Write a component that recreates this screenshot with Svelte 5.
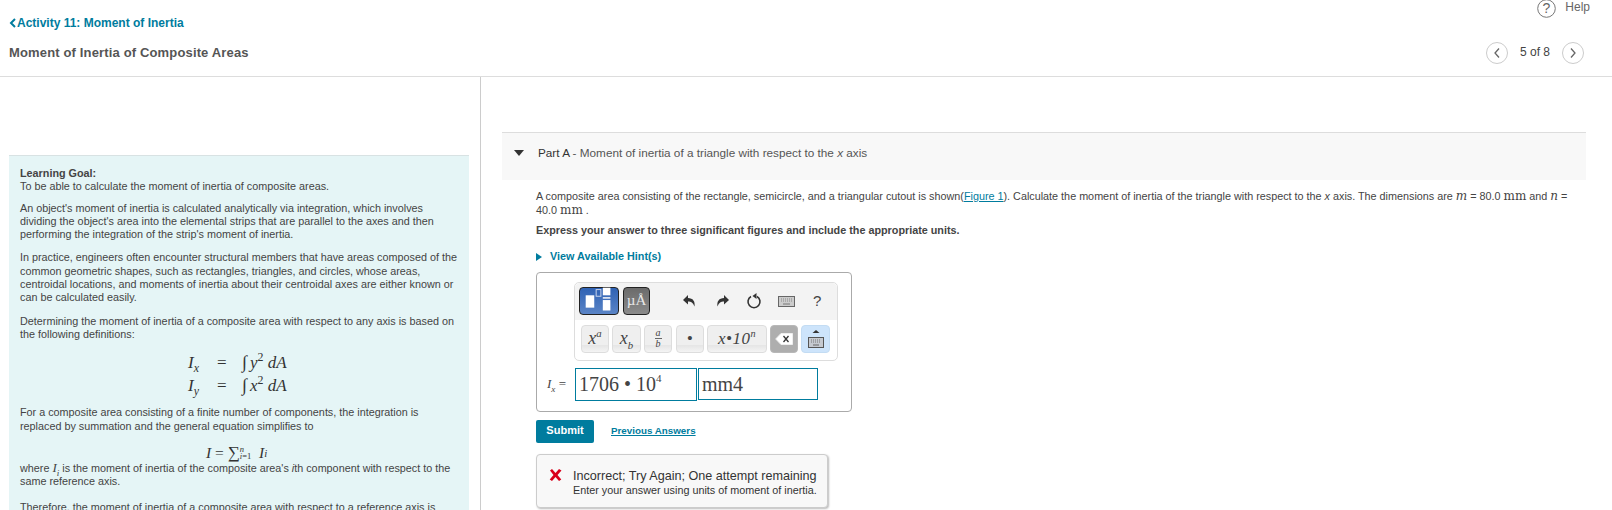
<script>
    const buttons = ['sup', 'sub', 'frac', 'dot', 'sci'];
</script>

<div class="page">
    <header>
        <div class="help">
            <svg width="19" height="19" viewBox="0 0 19 19"><circle cx="9.500" cy="9.500" r="8.800" fill="none" stroke="#777" stroke-width="1"/><text x="9.500" y="14" text-anchor="middle" class="qm">?</text></svg>
            <span>Help</span>
        </div>
        <a class="crumb" href="#a">
            <svg width="7" height="10" viewBox="0 0 7 10"><path d="M6 1 2 5l4 4" fill="none" stroke="#007c9e" stroke-width="2"/></svg>Activity 11: Moment of Inertia
        </a>
        <div class="titlebar">
            <h1>Moment of Inertia of Composite Areas</h1>
            <div class="pager">
                <span class="round"><svg width="8" height="12" viewBox="0 0 8 12"><path d="M6 1.500 2 6l4 4.500" fill="none" stroke="#666" stroke-width="1.300"/></svg></span>
                <span class="count">5 of 8</span>
                <span class="round"><svg width="8" height="12" viewBox="0 0 8 12"><path d="M2 1.500 6 6l-4 4.500" fill="none" stroke="#666" stroke-width="1.300"/></svg></span>
            </div>
        </div>
    </header>

    <main>
        <section class="left">
            <div class="goal">
                <p class="first"><b>Learning Goal:</b><br/>To be able to calculate the moment of inertia of composite areas.</p>
                <p>An object's moment of inertia is calculated analytically via integration, which involves dividing the object's area into the elemental strips that are parallel to the axes and then performing the integration of the strip's moment of inertia.</p>
                <p>In practice, engineers often encounter structural members that have areas composed of the common geometric shapes, such as rectangles, triangles, and circles, whose areas, centroidal locations, and moments of inertia about their centroidal axes are either known or can be calculated easily.</p>
                <p>Determining the moment of inertia of a composite area with respect to any axis is based on the following definitions:</p>
                <div class="eqs">
                    <div class="eq"><span class="lhs"><i>I</i><sub><i>x</i></sub></span><span class="rel">=</span><span class="rhs"><i class="int">∫</i><i>y</i><sup>2</sup> <i>dA</i></span></div>
                    <div class="eq"><span class="lhs"><i>I</i><sub><i>y</i></sub></span><span class="rel">=</span><span class="rhs"><i class="int">∫</i><i>x</i><sup>2</sup> <i>dA</i></span></div>
                </div>
                <p class="tight">For a composite area consisting of a finite number of components, the integration is replaced by summation and the general equation simplifies to</p>
                <div class="sum"><i>I</i> = <span class="sigma">∑</span><span class="limits"><i>n</i><span><i>i</i>=1</span></span>&nbsp;&nbsp;<i>I</i><sub><i>i</i></sub></div>
                <p class="where">where <span class="mi"><i>I</i><sub><i>i</i></sub></span> is the moment of inertia of the composite area's <i>i</i>th component with respect to the same reference axis.</p>
                <p>Therefore, the moment of inertia of a composite area with respect to a reference axis is</p>
            </div>
        </section>

        <section class="right">
            <div class="part">
                <svg width="10" height="6" viewBox="0 0 10 6"><path d="M0 0h10L5 6z" fill="#333"/></svg>
                <span><span class="pn">Part A</span> - Moment of inertia of a triangle with respect to the <i>x</i> axis</span>
            </div>
            <div class="problem">
                <p class="statement">A composite area consisting of the rectangle, semicircle, and a triangular cutout is shown(<a href="#f">Figure 1</a>). Calculate the moment of inertia of the triangle with respect to the <i>x</i> axis. The dimensions are <span class="mv"><i>m</i></span> = 80.0 <span class="mv">mm</span> and <span class="mv"><i>n</i></span> = 40.0 <span class="mv">mm</span> .</p>
                <p class="express">Express your answer to three significant figures and include the appropriate units.</p>
                <div class="hint"><svg width="6" height="8" viewBox="0 0 6 8"><path d="M0 0l6 4-6 4z" fill="#007c9e"/></svg><span>View Available Hint(s)</span></div>

                <div class="answer">
                    <div class="toolbar">
                        <div class="tool-top">
                            <span class="tmpl">
                                <svg width="40" height="28" viewBox="0 0 40 28"><rect x="6" y="8" width="9" height="13" fill="#fff"/><rect x="17" y="2" width="5" height="7" fill="none" stroke="#cdd8ee"/><rect x="24" y="0" width="8" height="8" fill="#fff"/><rect x="24" y="10" width="8" height="1.500" fill="#fff"/><rect x="24" y="13" width="8" height="11" fill="#fff"/></svg>
                            </span>
                            <span class="symb">µÅ</span>
                            <div class="actions">
                                <svg width="16" height="14" viewBox="0 0 16 14"><path d="M6 1 1 6l5 4.500V7.500c3 0 5 1 6.500 5 .8-5-1.500-8.500-6.500-8.500z" fill="#333"/></svg>
                                <svg width="16" height="14" viewBox="0 0 16 14"><path d="M10 1l5 5-5 4.500V7.500c-3 0-5 1-6.500 5-.8-5 1.500-8.500 6.500-8.500z" fill="#333"/></svg>
                                <svg width="16" height="16" viewBox="0 0 16 16"><path d="M5 3.500A6 6 0 1 0 11 3.500" fill="none" stroke="#333" stroke-width="1.600"/><path d="M11.500 0v6L7.500 3z" fill="#333" transform="translate(-1 0)"/></svg>
                                <svg width="17" height="11" viewBox="0 0 17 11"><rect x=".5" y=".5" width="16" height="10" fill="#ccc" stroke="#666"/><path d="M3 3h11M3 5h11" stroke="#888" stroke-dasharray="1 1"/><path d="M5 8h7" stroke="#777"/></svg>
                                <span class="q">?</span>
                            </div>
                        </div>
                        <div class="tool-bottom">
                            {#each buttons as b}
                                <span class="key {b}">
                                    {#if b === 'sup'}<i>x<sup>a</sup></i>
                                    {:else if b === 'sub'}<i>x<sub>b</sub></i>
                                    {:else if b === 'frac'}<i class="fr"><span>a</span><span>b</span></i>
                                    {:else if b === 'dot'}<b>•</b>
                                    {:else}<i>x•10<sup>n</sup></i>{/if}
                                </span>
                            {/each}
                            <span class="key del">
                                <svg width="18" height="12" viewBox="0 0 18 12"><path d="M6 .5h11.500v11H6L.7 6z" fill="#fff" stroke="#eee"/><path d="M8.500 3l5 6m0-6l-5 6" stroke="#333" stroke-width="1.300"/></svg>
                            </span>
                            <span class="key kbd">
                                <svg width="16" height="18" viewBox="0 0 16 18"><path d="M8 0l3.500 3h-7z" fill="#333"/><rect x=".5" y="7.500" width="15" height="10" fill="#c5c9d0" stroke="#555"/><path d="M3 10h10M3 12h10" stroke="#777" stroke-dasharray="1 1"/><path d="M5 15h6" stroke="#666"/></svg>
                            </span>
                        </div>
                    </div>
                    <div class="inputs">
                        <span class="lbl"><i>I</i><sub><i>x</i></sub> =</span>
                        <span class="field first-f">1706 • 10<sup>4</sup></span>
                        <span class="field">mm4</span>
                    </div>
                </div>

                <div class="submit-row">
                    <span class="submit">Submit</span>
                    <a class="prev" href="#p">Previous Answers</a>
                </div>

                <div class="feedback">
                    <svg width="13" height="12" viewBox="0 0 13 12"><path d="M1 1.500 3 0l3.500 4L10 0l2.500 1.500L8.500 6l3.800 4.500-2.300 1.500-3.500-4L3 12 .7 10.500 4.500 6z" fill="#d9001b"/></svg>
                    <div class="fb-text">
                        <div class="fb-main">Incorrect; Try Again; One attempt remaining</div>
                        <div class="fb-sub">Enter your answer using units of moment of inertia.</div>
                    </div>
                </div>
            </div>
        </section>
    </main>
</div>

<style>
    :global(body) {
        background: #fff;
    }

    .page {
        height: 510px;
        overflow: hidden;
        font-family: "Liberation Sans", Arial, sans-serif;
        font-size: 10.8px;
        line-height: 13.300px;
        color: #444;
    }

    header {
        position: relative;
        height: 60px;
        border-bottom: 1px solid #ddd;
        padding: 16px 0 0 9px;
    }

    .help {
        position: absolute;
        top: 0;
        right: 22px;
        display: flex;
        align-items: center;
        gap: 9px;
        height: 16px;
        font-size: 12px;
        color: #666;
    }

    .qm {
        font: 14px "Liberation Sans", sans-serif;
        fill: #666;
    }

    .crumb {
        display: flex;
        align-items: center;
        gap: 1px;
        font-size: 12px;
        font-weight: bold;
        color: #007c9e;
        text-decoration: none;
        line-height: 14px;
    }

    .titlebar {
        display: flex;
        align-items: center;
        justify-content: space-between;
        margin-top: 12px;
        padding-right: 28px;
    }

    h1 {
        margin: 0;
        font-size: 13px;
        line-height: 16px;
        color: #555;
        letter-spacing: 0.150px;
    }

    .pager {
        display: flex;
        align-items: center;
        gap: 12px;
        font-size: 12px;
        color: #444;
    }

    .round {
        display: flex;
        align-items: center;
        justify-content: center;
        width: 22px;
        height: 22px;
        box-sizing: border-box;
        border: 1px solid #ccc;
        border-radius: 50%;
    }

    main {
        display: grid;
        grid-template-columns: 481px 1fr;
    }

    .left {
        border-right: 1px solid #ccc;
        padding: 78px 11px 0 9px;
        height: 440px;
    }

    .goal {
        background: #e5f5f6;
        border-top: 1px solid #d8e2e3;
        padding: 11px 12px 0 11px;
    }

    p {
        margin: 0 0 10px;
    }

    .first {
        margin-bottom: 8px;
    }

    .eqs {
        margin: 9px 0 9px;
        padding-left: 168px;
        font-family: "Liberation Serif", serif;
        font-size: 17px;
        color: #333;
    }

    .eq {
        display: flex;
        height: 23px;
        align-items: center;
    }

    .lhs {
        width: 29px;
    }

    .rel {
        width: 25px;
    }

    .int {
        margin-right: 3px;
        font-size: 18px;
    }

    sub, sup {
        font-size: 70%;
        line-height: 0;
    }

    .tight {
        margin-bottom: 13px;
    }

    .sum {
        padding-left: 186px;
        font-family: "Liberation Serif", serif;
        font-size: 15.500px;
        line-height: 12px;
        display: flex;
        align-items: center;
        color: #333;
        white-space: pre;
    }

    .sigma {
        font-size: 17px;
    }

    .limits {
        display: inline-flex;
        flex-direction: column;
        font-size: 8.500px;
        line-height: 7px;
    }

    .where {
        margin-top: 1px;
        margin-bottom: 13px;
    }

    .mi {
        font-family: "Liberation Serif", serif;
        font-size: 13px;
    }

    .right {
        padding: 55px 26px 0 21px;
        min-width: 0;
    }

    .part {
        display: flex;
        align-items: center;
        gap: 14px;
        height: 40px;
        padding-left: 12px;
        padding-bottom: 7px;
        background: #f8f8f8;
        border-top: 1px solid #ddd;
        font-size: 11.750px;
        color: #555;
    }

    .pn {
        color: #333;
    }

    .problem {
        padding: 9px 0 0 34px;
    }

    .statement {
        margin-bottom: 7px;
        line-height: 14px;
    }

    .statement a {
        color: #007c9e;
    }

    .mv {
        font-family: "DejaVu Serif", serif;
        font-size: 12px;
        line-height: 12px;
    }

    .express {
        font-weight: bold;
        color: #444;
        margin-bottom: 13px;
    }

    .hint {
        display: flex;
        align-items: center;
        gap: 8px;
        font-weight: bold;
        color: #007c9e;
    }

    .answer {
        box-sizing: border-box;
        width: 316px;
        height: 140px;
        margin-top: 8px;
        padding: 9px 0 0 10px;
        border: 1px solid #aaa;
        border-radius: 4px;
    }

    .toolbar {
        box-sizing: border-box;
        width: 264px;
        height: 79px;
        margin-left: 27px;
        border: 1px solid #ddd;
        border-radius: 5px;
    }

    .tool-top {
        display: flex;
        align-items: center;
        gap: 4px;
        height: 37px;
        padding-left: 4px;
        background: #f3f3f3;
        border-radius: 5px 5px 0 0;
    }

    .tmpl, .symb {
        display: flex;
        align-items: center;
        justify-content: center;
        box-sizing: border-box;
        height: 28px;
        border: 1px solid #222;
        border-radius: 4px;
    }

    .tmpl {
        width: 40px;
        background: linear-gradient(#2f62b4, #5a84c6);
    }

    .symb {
        width: 27px;
        background: linear-gradient(#6b6b6b, #8a8a8a);
        color: #e8e8e8;
        font-family: "Liberation Serif", serif;
        font-size: 15px;
    }

    .actions {
        display: flex;
        align-items: center;
        gap: 16px;
        margin-left: 28px;
    }

    .q {
        font-size: 15px;
        color: #444;
        margin-left: 2px;
    }

    .tool-bottom {
        display: flex;
        align-items: center;
        gap: 3px;
        padding: 5px 0 0 6px;
    }

    .key {
        display: flex;
        align-items: center;
        justify-content: center;
        box-sizing: border-box;
        width: 28px;
        height: 28px;
        border: 1px solid #ddd;
        border-radius: 4px;
        background: linear-gradient(#efefef 72%, #e4e4e4 72%, #f4f4f4);
        font-family: "Liberation Serif", serif;
        font-size: 18px;
        color: #444;
    }

    .key sup, .key sub {
        font-size: 60%;
    }

    .sub {
        width: 29px;
    }

    .dot {
        margin-left: 1px;
        font-size: 15px;
    }

    .sci {
        width: 60px;
        font-size: 17px;
        letter-spacing: 0.500px;
    }

    .fr {
        display: flex;
        flex-direction: column;
        align-items: center;
        font-size: 10px;
        line-height: 10px;
    }

    .fr span:first-child {
        border-bottom: 1px solid #666;
        padding: 0 1px;
    }

    .del {
        background: #aeaeae;
        border-color: #b8b8b8;
    }

    .kbd {
        background: #cde4fb;
        border-color: #c3dcf3;
        width: 29px;
    }

    .inputs {
        display: flex;
        align-items: center;
        margin-top: 7px;
    }

    .lbl {
        width: 28px;
        font-family: "Liberation Serif", serif;
        font-size: 13px;
    }

    .field {
        box-sizing: border-box;
        width: 120px;
        height: 32px;
        padding-left: 3px;
        border: 1px solid #007c9e;
        font-family: "Liberation Serif", serif;
        font-size: 20px;
        line-height: 30px;
        color: #444;
    }

    .field sup {
        font-size: 55%;
        vertical-align: 9px;
    }

    .first-f {
        width: 122px;
        height: 33px;
        margin-right: 1px;
    }

    .submit-row {
        display: flex;
        align-items: center;
        gap: 17px;
        margin-top: 8px;
    }

    .submit {
        display: flex;
        align-items: center;
        justify-content: center;
        width: 58px;
        height: 23px;
        background: #007c9e;
        border-radius: 2px;
        color: #fff;
        font-size: 11px;
        font-weight: bold;
    }

    .prev {
        font-size: 9.800px;
        font-weight: bold;
        color: #007c9e;
    }

    .feedback {
        display: flex;
        gap: 11px;
        box-sizing: border-box;
        width: 292px;
        height: 54px;
        margin-top: 11px;
        padding: 14px 0 0 12px;
        background: #f8f8f8;
        border: 1px solid #ccc;
        border-radius: 4px;
        box-shadow: 1px 1px 2px #bbb;
    }

    .fb-main {
        font-size: 12.600px;
        line-height: 15px;
        color: #333;
    }

    .fb-sub {
        color: #333;
    }
</style>
